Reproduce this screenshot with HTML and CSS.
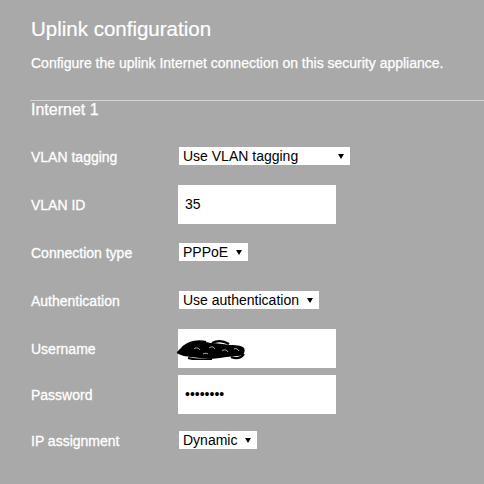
FILE: index.html
```html
<!DOCTYPE html>
<html>
<head>
<meta charset="utf-8">
<link rel="stylesheet" href="styles.css">
</head>
<body>
<div class="page">
  <h1 class="title">Uplink configuration</h1>
  <p class="desc">Configure the uplink Internet connection on this security appliance.</p>
  <div class="rule"></div>
  <h2 class="section">Internet 1</h2>
  <div class="form">
    <div class="row">
      <div class="label">VLAN tagging</div>
      <div class="control">
        <div class="select select-wide"><span>Use VLAN tagging</span><svg class="arrow" width="6" height="5" viewBox="0 0 6 5"><polygon points="0,0 6,0 3,5"/></svg></div>
      </div>
    </div>
    <div class="row">
      <div class="label">VLAN ID</div>
      <div class="control"><input class="text" type="text" value="35"></div>
    </div>
    <div class="row">
      <div class="label">Connection type</div>
      <div class="control">
        <div class="select"><span>PPPoE</span><svg class="arrow" width="6" height="5" viewBox="0 0 6 5"><polygon points="0,0 6,0 3,5"/></svg></div>
      </div>
    </div>
    <div class="row">
      <div class="label">Authentication</div>
      <div class="control">
        <div class="select"><span>Use authentication</span><svg class="arrow" width="6" height="5" viewBox="0 0 6 5"><polygon points="0,0 6,0 3,5"/></svg></div>
      </div>
    </div>
    <div class="row">
      <div class="label">Username</div>
      <div class="control control-rel">
        <input class="text" type="text" value="">
        <svg class="scribble" width="70" height="20" viewBox="0 0 70 20">
          <path d="M1 12 C5 7 10 4 16 3 C22 1 29 2 35 3 C41 3 47 4 53 5 C59 5 65 5 68 8 C70 12 67 16 62 16 C56 16 50 17 44 18 C38 19 30 19 24 18 C18 17 10 17 5 15 C2 14 0 13 1 12 Z" fill="#000"/>
          <path d="M6 8 C12 2 22 0 30 2 M36 3 C42 0 48 1 53 4 M12 18 C20 20 28 20 36 19 M55 17 C60 19 65 18 68 14 M2 13 L10 10" stroke="#000" stroke-width="2.2" fill="none"/>
          <path d="M18 9 C20 7 23 8 24 10 M33 8 C35 6 38 7 39 9 M46 11 C48 9 51 10 52 12 M27 14 C29 13 31 13 32 14 M58 9 C60 8 62 9 63 11" stroke="#fff" stroke-width="0.7" fill="none"/>
        </svg>
      </div>
    </div>
    <div class="row row-pw">
      <div class="label">Password</div>
      <div class="control"><input class="text" type="password" value="password"></div>
    </div>
    <div class="row">
      <div class="label">IP assignment</div>
      <div class="control">
        <div class="select"><span>Dynamic</span><svg class="arrow" width="6" height="5" viewBox="0 0 6 5"><polygon points="0,0 6,0 3,5"/></svg></div>
      </div>
    </div>
  </div>
</div>
</body>
</html>
```
FILE: styles.css
```css
html, body {
  margin: 0;
  padding: 0;
  background: #a9a9a9;
}
body {
  font-family: "Liberation Sans", Arial, sans-serif;
  color: #ffffff;
  width: 484px;
  height: 484px;
  overflow: hidden;
}
.page {
  padding-top: 17px;
}
.title {
  margin: 0 0 0 31px;
  font-size: 20.5px;
  line-height: 23px;
  font-weight: normal;
  -webkit-text-stroke: 0.2px #ffffff;
}
.desc {
  margin: 15px 0 0 31px;
  font-size: 14px;
  line-height: 16px;
  -webkit-text-stroke: 0.25px #ffffff;
}
.rule {
  margin: 29px 0 0 30px;
  height: 1px;
  background: #d6d6d6;
}
.section {
  margin: 0 0 0 31px;
  font-size: 16px;
  line-height: 16px;
  font-weight: normal;
  padding-top: 1px;
  -webkit-text-stroke: 0.25px #ffffff;
}
.form {
  margin-top: 14px;
  padding-left: 31px;
}
.row {
  display: flex;
  align-items: center;
  height: 48px;
}
.row-pw {
  height: 44px;
}
.label {
  width: 147px;
  font-size: 14px;
  line-height: 16px;
  padding-top: 1px;
  -webkit-text-stroke: 0.3px #ffffff;
}
.control {
  display: flex;
  align-items: center;
}
.control-rel {
  position: relative;
}
.select {
  margin-left: 1px;
  display: inline-flex;
  align-items: center;
  gap: 8px;
  height: 18px;
  padding: 0 6px 0 4px;
  background: #ffffff;
  color: #000000;
  font-size: 14px;
  line-height: 18px;
}
.select-wide {
  width: 161px;
  justify-content: space-between;
}
.arrow {
  display: block;
  fill: #000;
}
.text {
  display: block;
  box-sizing: border-box;
  width: 158px;
  height: 39px;
  border: 0;
  margin: 0;
  padding: 0 7px;
  background: #ffffff;
  color: #000000;
  font-family: "Liberation Sans", Arial, sans-serif;
  font-size: 14px;
  outline: none;
}
.scribble {
  position: absolute;
  left: -2px;
  top: 11px;
}
```
